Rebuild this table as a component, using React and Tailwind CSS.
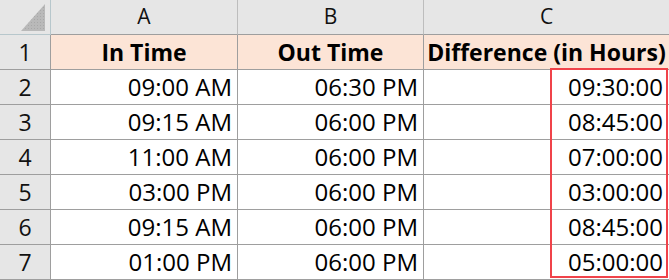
import React from "react";

const rows = [
  ["09:00 AM", "06:30 PM", "09:30:00"],
  ["09:15 AM", "06:00 PM", "08:45:00"],
  ["11:00 AM", "06:00 PM", "07:00:00"],
  ["03:00 PM", "06:00 PM", "03:00:00"],
  ["09:15 AM", "06:00 PM", "08:45:00"],
  ["01:00 PM", "06:00 PM", "05:00:00"],
];

const font = { fontFamily: '"Open Sans", "Noto Sans", sans-serif' };

export default function App() {
  return (
    <div className="relative w-[669px] h-[280px] overflow-hidden bg-white text-black" style={font}>
      <div className="grid grid-cols-[51px_187px_186px_245px] grid-rows-[35px_35px_35px_35px_35px_35px_35px_35px]">
        {/* header row */}
        <div className="bg-[#e6e6e6] border-r border-b border-r-[#b7c7cc] border-b-[#b7c7cc] relative">
          <svg width="50" height="34" className="absolute left-0 top-0">
            <defs>
              <pattern id="dots" width="3" height="3" patternUnits="userSpaceOnUse">
                <rect width="3" height="3" fill="#b9b9b9" />
                <rect x="1" y="1" width="1" height="1" fill="#a8a8a8" />
              </pattern>
            </defs>
            <polygon points="21,31 45,4 45,31" fill="url(#dots)" />
          </svg>
        </div>
        {["A", "B", "C"].map((l, i) => (
          <div
            key={l}
            className={`bg-[#e6e6e6] border-b border-b-[#9e9e9e] flex items-center justify-center text-[21px] text-[#111] ${i < 2 ? "border-r border-r-[#bdbdbd]" : ""}`}
          >
            {l}
          </div>
        ))}
        {/* row 1 */}
        <div className="bg-[#e6e6e6] border-r border-b border-[#9e9e9e] flex items-center justify-center text-[23px] text-[#111]">1</div>
        <div className="bg-[#fce4d6] border-r border-b border-[#9e9e9e] flex items-center justify-center text-[23px] font-bold">In Time</div>
        <div className="bg-[#fce4d6] border-r border-b border-[#9e9e9e] flex items-center justify-center text-[23px] font-bold">Out Time</div>
        <div className="bg-[#fce4d6] border-b border-[#9e9e9e] flex items-center justify-center text-[23px] font-bold whitespace-nowrap">Difference (in Hours)</div>
        {rows.map((r, i) => (
          <React.Fragment key={i}>
            <div className="bg-[#e6e6e6] border-r border-b border-[#9e9e9e] flex items-center justify-center text-[23px] text-[#111]">{i + 2}</div>
            <div className="border-r border-b border-[#9e9e9e] flex items-center justify-end pr-[5px] text-[24px]">{r[0]}</div>
            <div className="border-r border-b border-[#9e9e9e] flex items-center justify-end pr-[5px] text-[24px]">{r[1]}</div>
            <div className="border-b border-[#9e9e9e] flex items-center justify-end pr-[6px] text-[24px]">{r[2]}</div>
          </React.Fragment>
        ))}
      </div>
      <div className="absolute left-[550px] top-[68px] w-[118px] h-[210px] border-2 border-[#f0434a]" />
    </div>
  );
}
